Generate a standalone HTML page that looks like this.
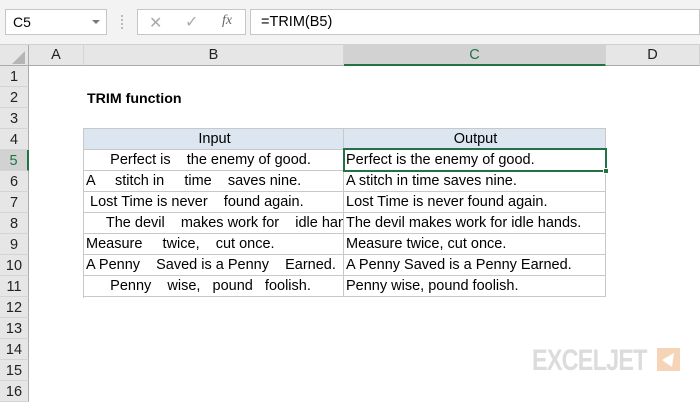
<!DOCTYPE html>
<html><head><style>
*{margin:0;padding:0;box-sizing:border-box}
body{width:700px;height:400px;overflow:hidden;background:#fff;font-family:"Liberation Sans",sans-serif;position:relative;font-size:14.5px;color:#000}
.a{position:absolute}
.rh{position:absolute;left:0;width:29px;height:21px;background:#e6e6e6;border-bottom:1px solid #d4d4d4;border-right:1px solid #ababab;text-align:center;line-height:22px;font-size:14.5px;color:#222}
.ch{position:absolute;top:45px;height:21px;background:#e6e6e6;border-right:1px solid #d4d4d4;border-bottom:1px solid #ababab;text-align:center;line-height:21px;font-size:14.5px;color:#222}
.c{position:absolute;height:21px;line-height:21px;white-space:pre;overflow:hidden;border-right:1px solid #c8c8c8;border-bottom:1px solid #c8c8c8;padding-left:2px}
</style></head><body>
<div class="a" style="left:0;top:0;width:700px;height:45px;background:#f3f3f3;border-bottom:1px solid #d0d0d0"></div>
<div class="a" style="left:5px;top:9px;width:102px;height:26px;background:#fff;border:1px solid #c6c6c6;line-height:24px;padding-left:7px;font-size:14px">C5</div>
<div class="a" style="left:92px;top:20px;width:0;height:0;border-left:4px solid transparent;border-right:4px solid transparent;border-top:4px solid #777"></div>
<div class="a" style="left:121px;top:15px;width:2px;height:14px;border-left:2px dotted #bbb"></div>
<div class="a" style="left:137px;top:9px;width:109px;height:26px;background:#fff;border:1px solid #c6c6c6"></div>
<div class="a" style="left:149px;top:13px;color:#aaa;font-size:16px">✕</div>
<div class="a" style="left:185px;top:12px;color:#aaa;font-size:16px">✓</div>
<div class="a" style="left:222px;top:13px;color:#666;font-size:14px;font-family:'Liberation Serif',serif"><i>fx</i></div>
<div class="a" style="left:250px;top:9px;width:450px;height:26px;background:#fff;border:1px solid #c6c6c6;line-height:24px;padding-left:10px;font-size:14.5px">=TRIM(B5)</div>

<div class="a" style="left:0;top:45px;width:29px;height:21px;background:#e6e6e6;border-right:1px solid #ababab;border-bottom:1px solid #ababab"></div>
<div class="a" style="left:12px;top:51px;width:0;height:0;border-left:13px solid transparent;border-bottom:13px solid #b5b5b5"></div>
<div class="ch" style="left:29px;width:55px">A</div>
<div class="ch" style="left:84px;width:260px">B</div>
<div class="ch" style="left:344px;width:262px;background:#d2d2d2;border-bottom:2px solid #217346;color:#217346">C</div>
<div class="ch" style="left:606px;width:94px">D</div>

<div class="rh" style="top:66px">1</div>
<div class="rh" style="top:87px">2</div>
<div class="rh" style="top:108px">3</div>
<div class="rh" style="top:129px">4</div>
<div class="rh" style="top:150px;background:#d2d2d2;border-right:2px solid #217346;color:#217346">5</div>
<div class="rh" style="top:171px">6</div>
<div class="rh" style="top:192px">7</div>
<div class="rh" style="top:213px">8</div>
<div class="rh" style="top:234px">9</div>
<div class="rh" style="top:255px">10</div>
<div class="rh" style="top:276px">11</div>
<div class="rh" style="top:297px">12</div>
<div class="rh" style="top:318px">13</div>
<div class="rh" style="top:339px">14</div>
<div class="rh" style="top:360px">15</div>
<div class="rh" style="top:381px">16</div>

<div class="a" style="left:87px;top:89px;font-weight:bold;font-size:14.2px;line-height:21px">TRIM function</div>

<div class="a" style="left:83px;top:128px;width:523px;height:170px;border-left:1px solid #c8c8c8;border-top:1px solid #c8c8c8"></div>
<div class="c" style="left:84px;top:129px;width:260px;background:#dce6f1;text-align:center">Input</div>
<div class="c" style="left:344px;top:129px;width:262px;background:#dce6f1;text-align:center">Output</div>

<div class="c" style="left:84px;top:150px;width:260px">      Perfect is    the enemy of good.</div>
<div class="c" style="left:84px;top:171px;width:260px">A     stitch in     time    saves nine.</div>
<div class="c" style="left:84px;top:192px;width:260px"> Lost Time is never    found again.</div>
<div class="c" style="left:84px;top:213px;width:260px">     The devil    makes work for    idle hands.</div>
<div class="c" style="left:84px;top:234px;width:260px">Measure     twice,    cut once.</div>
<div class="c" style="left:84px;top:255px;width:260px">A Penny    Saved is a Penny    Earned.</div>
<div class="c" style="left:84px;top:276px;width:260px">      Penny    wise,   pound   foolish.</div>

<div class="c" style="left:344px;top:150px;width:262px">Perfect is the enemy of good.</div>
<div class="c" style="left:344px;top:171px;width:262px">A stitch in time saves nine.</div>
<div class="c" style="left:344px;top:192px;width:262px">Lost Time is never found again.</div>
<div class="c" style="left:344px;top:213px;width:262px">The devil makes work for idle hands.</div>
<div class="c" style="left:344px;top:234px;width:262px">Measure twice, cut once.</div>
<div class="c" style="left:344px;top:255px;width:262px">A Penny Saved is a Penny Earned.</div>
<div class="c" style="left:344px;top:276px;width:262px">Penny wise, pound foolish.</div>

<div class="a" style="left:343px;top:148px;width:264px;height:24px;border:2px solid #217346"></div>
<div class="a" style="left:603px;top:168px;width:6px;height:6px;background:#217346;border:1px solid #fff"></div>

<div class="a" style="left:532px;top:344px;font-weight:bold;font-size:30px;color:#dcdcdc;letter-spacing:-1px;line-height:34px;transform:scaleX(0.78);transform-origin:left">EXCELJET</div>
<div class="a" style="left:657px;top:348px;width:23px;height:23px;background:#f5d4b8"></div>
<svg class="a" style="left:657px;top:348px" width="23" height="23"><path d="M5 12 L17 5 L15 19 Z" fill="#fff"/></svg>
</body></html>
